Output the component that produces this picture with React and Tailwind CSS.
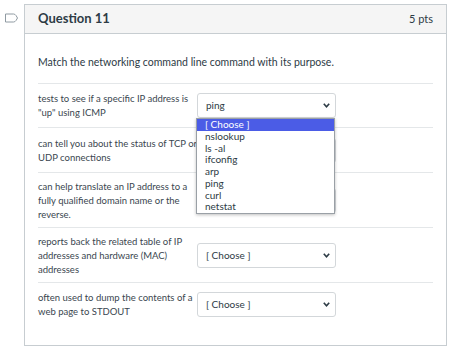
import React from 'react';

const ROWS = [
  { text: 'tests to see if a specific IP address is "up" using ICMP', value: 'ping', h: 'h-[44px]', open: true },
  { text: 'can tell you about the status of TCP or UDP connections', value: '[ Choose ]', h: 'h-[45px]' },
  { text: 'can help translate an IP address to a fully qualified domain name or the reverse.', value: '[ Choose ]', h: 'h-[55px]' },
  { text: 'reports back the related table of IP addresses and hardware (MAC) addresses', value: '[ Choose ]', h: 'h-[55px]' },
  { text: 'often used to dump the contents of a web page to STDOUT', value: '[ Choose ]', h: 'h-[43px]' },
];

const OPTIONS = ['[ Choose ]', 'nslookup', 'ls -al', 'ifconfig', 'arp', 'ping', 'curl', 'netstat'];

function Chevron() {
  return (
    <svg width="7" height="5" viewBox="0 0 7 5" className="shrink-0">
      <path d="M0.8 0.8 L3.5 3.8 L6.2 0.8" fill="none" stroke="#2d3b45" strokeWidth="1.6" />
    </svg>
  );
}

function FakeSelect({ value, open }) {
  return (
    <div className="relative">
      <div className="w-[139px] h-[25px] border border-[#d3d7da] rounded-[3px] bg-white flex items-center justify-between pl-[8px] pr-[5px] text-[10px] text-[#2d3b45]">
        <span>{value}</span>
        <Chevron />
      </div>
      {open && (
        <div className="absolute left-[-1px] top-[25px] w-[139px] bg-white border border-[#9aa0a6] shadow-[0_1px_3px_rgba(0,0,0,0.25)] z-10">
          {OPTIONS.map((o, i) => (
            <div key={o} className={`h-[11.75px] leading-[11.75px] pl-[8px] text-[10px] ${i === 0 ? 'bg-[#4b5ce6] text-white' : 'text-[#2d3b45]'}`}>
              {o}
            </div>
          ))}
        </div>
      )}
    </div>
  );
}

export default function App() {
  return (
    <div className="w-[474px] h-[351px] bg-white flex font-['Lato','Liberation_Sans',sans-serif] text-[#2d3b45]">
      {/* bookmark flag */}
      <div className="w-[24px] shrink-0 pt-[13px] pl-[4px]">
        <svg width="15" height="10" viewBox="0 0 15 10">
          <path d="M1.5 1 H9.5 Q11 1 12 2.5 L13.5 5 L12 7.5 Q11 9 9.5 9 H1.5 Z" fill="none" stroke="#8f9aa2" strokeWidth="1" strokeLinejoin="round" />
        </svg>
      </div>

      <div className="mt-[4px] w-[423px] h-[342px] border border-[#c7cdd1] flex flex-col">
        <div className="h-[29px] shrink-0 bg-[#f5f5f5] border-b border-[#c7cdd1] flex items-center justify-between px-[13px]">
          <span className="text-[13px] font-bold text-[#2d3b45]">Question 11</span>
          <span className="text-[11px] text-[#2d3b45]">5 pts</span>
        </div>

        <div className="px-[13px]">
          <p className="pt-[20px] pb-[13px] text-[10.5px] leading-[16px]">
            Match the networking command line command with its purpose.
          </p>

          {ROWS.map((r) => (
            <div key={r.text} className={`border-t border-[#e4e7e9] ${r.h} flex items-center`}>
              <div className="w-[159px] shrink-0 pt-[1px] text-[9.5px] leading-[14px] text-[#3a464f]">{r.text}</div>
              <div className="ml-[0px]">
                <FakeSelect value={r.value} open={r.open} />
              </div>
            </div>
          ))}
        </div>
      </div>
    </div>
  );
}
